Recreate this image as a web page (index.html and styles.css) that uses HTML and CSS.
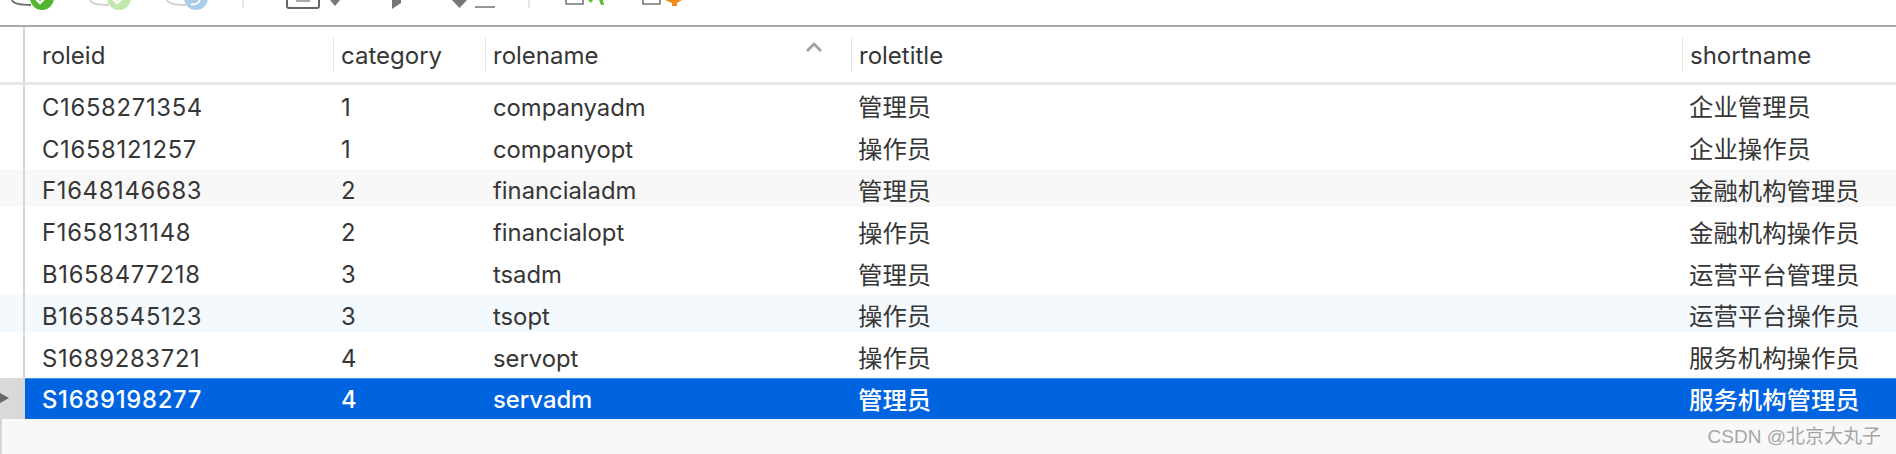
FILE: index.html
```html
<!DOCTYPE html>
<html lang="zh">
<head>
<meta charset="utf-8">
<title>roles</title>
<link rel="stylesheet" href="styles.css">
</head>
<body>
<div class="toolbar">
<svg class="toolbar-icons" width="720" height="25" viewBox="0 0 720 25" fill="none">
  <path d="M12 0c1 3 6 5 19 5" stroke="#6e6e6e" stroke-width="2"/>
  <circle cx="42" cy="-2" r="12" fill="#53b52f"/>
  <path d="M36 -1l4 4 7-7" stroke="#fff" stroke-width="2.5"/>
  <path d="M90 0c1 3 6 5 19 5" stroke="#cfcfcf" stroke-width="2"/>
  <circle cx="119" cy="-2" r="12" fill="#bfe8ab"/>
  <path d="M113 -1l4 4 7-7" stroke="#fff" stroke-width="2.5"/>
  <path d="M167 0c1 3 6 5 19 5" stroke="#cfcfcf" stroke-width="2"/>
  <circle cx="196" cy="-2" r="12" fill="#abcbe9"/>
  <path d="M191 4c5 1 9-1 9-6" stroke="#fff" stroke-width="2"/>
  <path d="M243 0v8" stroke="#dcdcdc" stroke-width="1.5"/>
  <path d="M287 0v6a2 2 0 0 0 2 2h28a2 2 0 0 0 2-2V0" stroke="#666" stroke-width="2"/>
  <path d="M296 1h14" stroke="#aaa" stroke-width="2"/>
  <path d="M330 0h10l-5 6z" fill="#777"/>
  <path d="M392 0h9v3l-9 6z" fill="#777"/>
  <path d="M452 0h15l-7.500 8z" fill="#777"/>
  <path d="M475 7h20" stroke="#8a8a8a" stroke-width="1.8"/>
  <path d="M529 0v8" stroke="#dcdcdc" stroke-width="1.5"/>
  <path d="M566 0v4h17V0" stroke="#777" stroke-width="1.6"/>
  <path d="M588 0h5l-2 3zM599 0h4l1 5-3 0z" fill="#5cc234"/>
  <path d="M643 0v4h17V0" stroke="#777" stroke-width="1.6"/>
  <path d="M665 0h17l-5 3v3h-5v-3z" fill="#f28a1c"/>
</svg>
</div>
<div class="grid">
  <div class="row head">
    <div class="gutter"></div>
    <div class="cell first"><span>roleid</span></div>
    <div class="cell"><span>category</span></div>
    <div class="cell"><span>rolename</span><svg class="caret" width="18" height="10" viewBox="0 0 18 10" fill="none"><path d="M2 9l7-7 7 7" stroke="#a0a0a0" stroke-width="2.8"/></svg></div>
    <div class="cell"><span>roletitle</span></div>
    <div class="cell"><span>shortname</span></div>
  </div>
  <div class="body">
    <div class="row"><div class="gutter"></div><div class="cell first id">C1658271354</div><div class="cell">1</div><div class="cell">companyadm</div><div class="cell cjk">管理员</div><div class="cell cjk">企业管理员</div></div>
    <div class="row"><div class="gutter"></div><div class="cell first id">C1658121257</div><div class="cell">1</div><div class="cell">companyopt</div><div class="cell cjk">操作员</div><div class="cell cjk">企业操作员</div></div>
    <div class="row grey"><div class="gutter"></div><div class="cell first id">F1648146683</div><div class="cell">2</div><div class="cell">financialadm</div><div class="cell cjk">管理员</div><div class="cell cjk">金融机构管理员</div></div>
    <div class="row"><div class="gutter"></div><div class="cell first id">F1658131148</div><div class="cell">2</div><div class="cell">financialopt</div><div class="cell cjk">操作员</div><div class="cell cjk">金融机构操作员</div></div>
    <div class="row"><div class="gutter"></div><div class="cell first id">B1658477218</div><div class="cell">3</div><div class="cell">tsadm</div><div class="cell cjk">管理员</div><div class="cell cjk">运营平台管理员</div></div>
    <div class="row tint"><div class="gutter"></div><div class="cell first id">B1658545123</div><div class="cell">3</div><div class="cell">tsopt</div><div class="cell cjk">操作员</div><div class="cell cjk">运营平台操作员</div></div>
    <div class="row"><div class="gutter"></div><div class="cell first id">S1689283721</div><div class="cell">4</div><div class="cell">servopt</div><div class="cell cjk">操作员</div><div class="cell cjk">服务机构操作员</div></div>
    <div class="row selected"><div class="gutter"><svg width="10" height="12" viewBox="0 0 10 12"><path d="M0 1l9 5-9 5z" fill="#666"/></svg></div><div class="cell first id">S1689198277</div><div class="cell">4</div><div class="cell">servadm</div><div class="cell cjk">管理员</div><div class="cell cjk">服务机构管理员</div></div>
  </div>
  <div class="empty"><div class="gutter"></div></div>
</div>
<div class="watermark">CSDN @北京大丸子</div>
</body>
</html>
```

FILE: styles.css
```css
html, body {
  margin: 0;
  height: 454px;
  overflow: hidden;
  background: #fff;
}
body {
  position: relative;
  display: flex;
  flex-direction: column;
  font-family: Inter, "Noto Sans CJK SC", sans-serif;
  font-size: 23.8px;
  color: #363636;
}
.toolbar {
  height: 25px;
  flex: none;
  border-bottom: 2px solid #a9a9a9;
}
.toolbar-icons {
  display: block;
}
.grid {
  flex: 1;
  display: flex;
  flex-direction: column;
  min-height: 0;
}
.row {
  display: grid;
  grid-template-columns: 25px 308px 152px 366px 831px 1fr;
  height: 41.8px;
  align-items: center;
  white-space: nowrap;
}
.gutter {
  height: 100%;
  box-sizing: border-box;
  border-right: 2px solid #d6d6d6;
  display: flex;
  align-items: center;
}
.cell {
  padding: 3px 0 0 8px;
}
.cell.first {
  padding-left: 17px;
}
.cell.id {
  letter-spacing: 0.7px;
}
.cell.cjk {
  padding: 0 0 0 7px;
  font-size: 24.4px;
}
.head {
  height: 55px;
  border-bottom: 3px solid #e8e8e8;
  font-size: 24px;
}
.head .cell {
  height: 34px;
  line-height: 36px;
  display: flex;
  justify-content: space-between;
  border-left: 1px solid #e2e2e2;
  padding: 0 0 0 7px;
}
.head .cell.first {
  border-left: 0;
  padding-left: 17px;
}
.caret {
  margin: 4px 28px 0 0;
}
.grey {
  background: linear-gradient(#f8f8f8, #f8f8f8) no-repeat top / 100% 38px;
}
.tint {
  background: linear-gradient(#f4f9fe, #f4f9fe) no-repeat top / 100% 38px;
}
.selected {
  background: #0064e1;
  color: #fff;
  font-weight: 500;
  box-shadow: inset 0 1px 0 #3f8be9, 0 1px 0 #dfe6f0;
}
.selected .gutter {
  background: #d9d9d9;
}
.empty {
  flex: 1;
  background: #f8f8f8;
  display: flex;
}
.watermark {
  position: absolute;
  right: 15px;
  bottom: 6px;
  font-family: "Liberation Sans", "Noto Sans CJK SC", sans-serif;
  font-size: 19px;
  line-height: 22px;
  color: #a6a6a6;
}
```
